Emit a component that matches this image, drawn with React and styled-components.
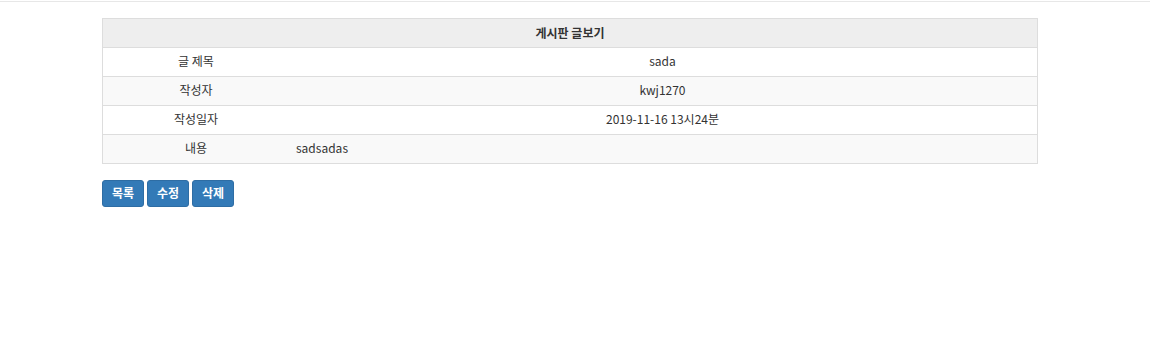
import styled, { createGlobalStyle } from "styled-components";

const GlobalStyle = createGlobalStyle`
    body {
        margin: 0;
        background: #FFFFFF;
        font-family: "Noto Sans CJK KR", "Noto Sans", sans-serif;
        font-size: 12px;
        color: #333333;
    }
`;

const rows = [
    { label: "글 제목", value: "sada" },
    { label: "작성자", value: "kwj1270" },
    { label: "작성일자", value: "2019-11-16 13시24분" },
    { label: "내용", value: "sadsadas", left: true },
];

function App() {
    return (
        <>
            <GlobalStyle />
            <TopBar />
            <Container>
                <Board>
                    <thead>
                        <tr>
                            <HeadCell colSpan={2}>게시판 글보기</HeadCell>
                        </tr>
                    </thead>
                    <tbody>
                        {rows.map((row, i) => (
                            <Row key={row.label} striped={i % 2 === 1}>
                                <LabelCell>{row.label}</LabelCell>
                                <ValueCell left={row.left}>{row.value}</ValueCell>
                            </Row>
                        ))}
                    </tbody>
                </Board>
                <Buttons>
                    <Button>목록</Button>
                    <Button>수정</Button>
                    <Button>삭제</Button>
                </Buttons>
            </Container>
        </>
    );
}

export default App;

const TopBar = styled.div`
    height: 1px;
    margin-top: 1px;
    background: #E7E7E7;
`;

const Container = styled.div`
    width: 936px;
    margin: 16px 0 0 102px;
`;

const Board = styled.table`
    width: 100%;
    border-collapse: collapse;
    border: 1px solid #DDDDDD;
`;

const HeadCell = styled.th`
    height: 26px;
    padding: 0 8px 2px;
    background: #EEEEEE;
    font-weight: 600;
    text-align: center;
    border-bottom: 1px solid #DDDDDD;
`;

const Row = styled.tr.withConfig({ shouldForwardProp: (p) => p !== "striped" })`
    background: ${(p) => (p.striped ? "#F9F9F9" : "#FFFFFF")};
    border-top: 1px solid #DDDDDD;
`;

const LabelCell = styled.td`
    width: 170px;
    height: 25px;
    padding: 0 8px 3px;
    text-align: center;
`;

const ValueCell = styled.td.withConfig({ shouldForwardProp: (p) => p !== "left" })`
    height: 25px;
    padding: 0 8px 3px 7px;
    text-align: ${(p) => (p.left ? "left" : "center")};
`;

const Buttons = styled.div`
    display: flex;
    gap: 3px;
    margin-top: 16px;
`;

const Button = styled.button`
    width: 42px;
    height: 27px;
    padding: 0 0 2px;
    background: #337AB7;
    border: 1px solid #2E6DA4;
    border-radius: 3px;
    color: #FFFFFF;
    font-family: "Noto Sans CJK KR", "Noto Sans", sans-serif;
    font-size: 12px;
    font-weight: 600;
`;
